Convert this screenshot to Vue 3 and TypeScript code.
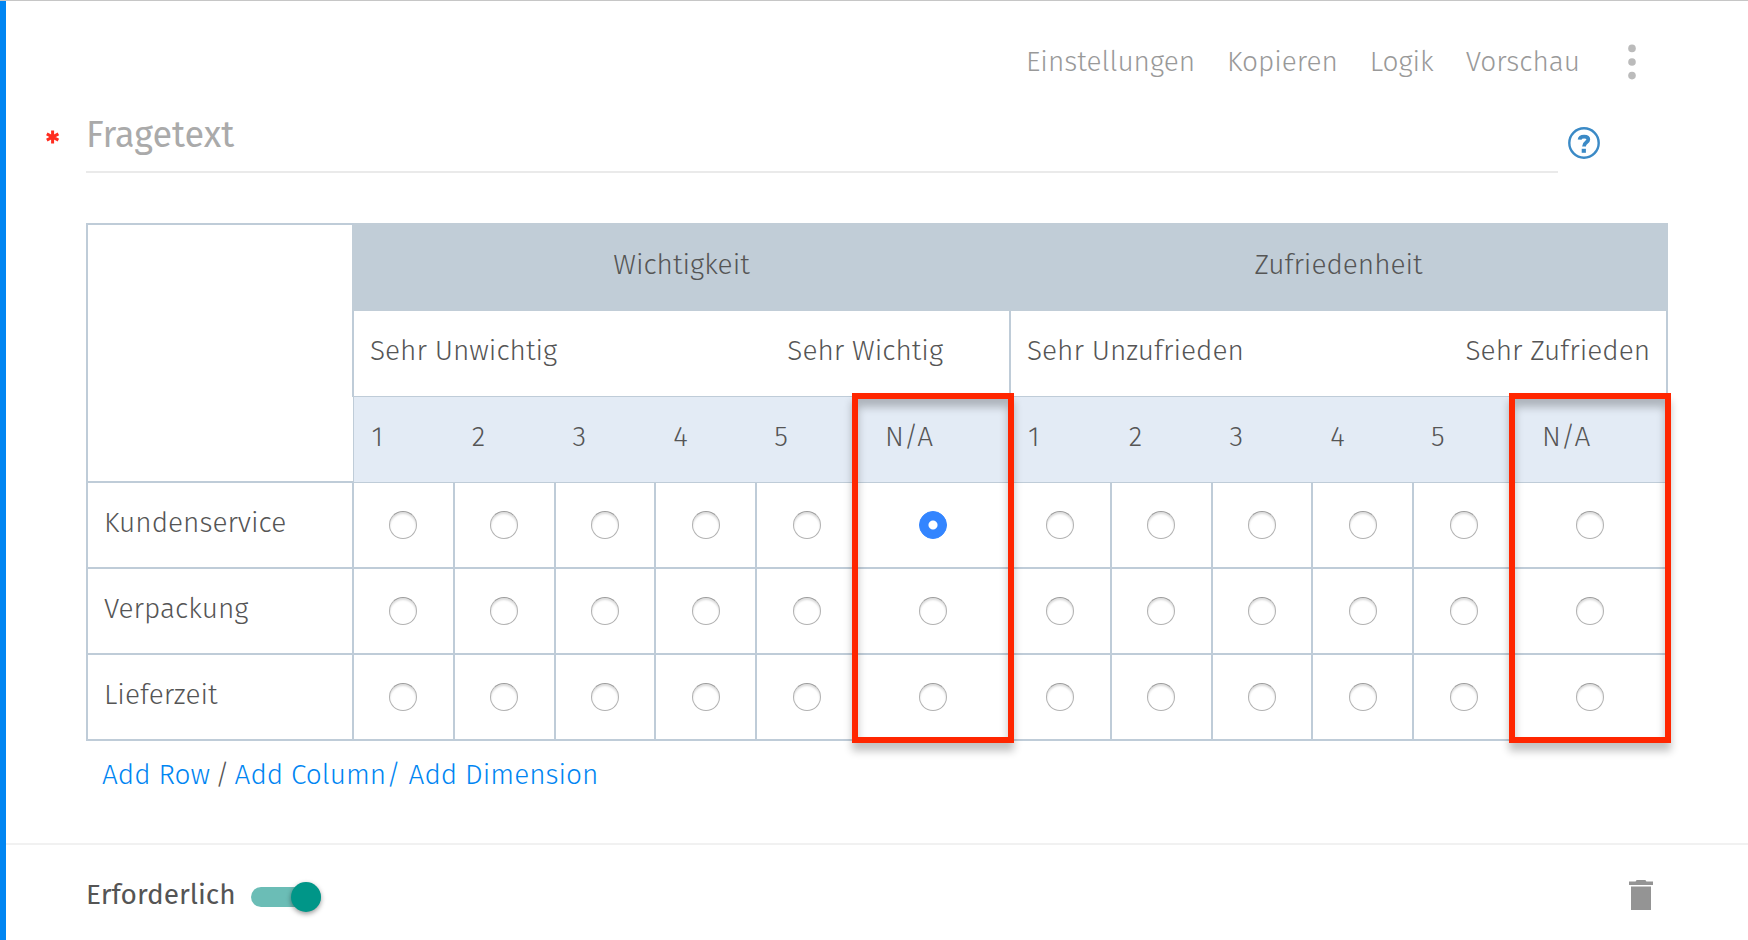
<script setup lang="ts">
import { reactive, ref } from 'vue'

interface Dimension {
  id: string
  title: string
  low: string
  high: string
  inset: boolean
}

const actions: string[] = ['Einstellungen', 'Kopieren', 'Logik', 'Vorschau']
const scale: string[] = ['1', '2', '3', '4', '5', 'N/A']
const rows: string[] = ['Kundenservice', 'Verpackung', 'Lieferzeit']
const dimensions: Dimension[] = [
  { id: 'importance', title: 'Wichtigkeit', low: 'Sehr Unwichtig', high: 'Sehr Wichtig', inset: true },
  { id: 'satisfaction', title: 'Zufriedenheit', low: 'Sehr Unzufrieden', high: 'Sehr Zufrieden', inset: false },
]

const question = ref('')
const required = ref(true)
const answers = reactive<Record<string, string>>({ 'importance-Kundenservice': 'N/A' })
</script>

<template>
  <div class="page">
    <main class="card">
      <section class="editor">
        <nav class="actions">
          <a v-for="action in actions" :key="action" href="#">{{ action }}</a>
          <button class="icon-button more" type="button" aria-label="Mehr">
            <svg width="8" height="36" viewBox="0 0 8 36" fill="#bbb">
              <circle cx="4" cy="4.4" r="3.8" />
              <circle cx="4" cy="18" r="3.8" />
              <circle cx="4" cy="31.6" r="3.8" />
            </svg>
          </button>
        </nav>

        <div class="question">
          <svg class="star" width="14" height="14" viewBox="0 0 14 14" stroke="#ff2d20" stroke-width="3">
            <path d="M6.6 .6V13.4M.8 3.9L12.4 10.1M12.4 3.9L.8 10.1" />
          </svg>
          <input v-model="question" class="question-text" type="text" placeholder="Fragetext" aria-label="Fragetext" />
          <button class="icon-button help" type="button" aria-label="Hilfe">
            <svg width="32" height="32" viewBox="0 0 32 32" fill="none" stroke="#3b8ac6">
              <circle cx="16" cy="16" r="14.7" stroke-width="2.4" />
              <path d="M11.6 12.6C11.8 10.3 13.6 9.6 16.1 9.6C18.8 9.6 20.3 10.5 20.3 12.6C20.3 15.4 16 15.4 16 19.4" stroke-width="3.8" />
              <path d="M15.8 21.8V25.8" stroke-width="4.2" />
            </svg>
          </button>
        </div>

        <div class="matrix-wrap">
          <table class="matrix">
            <colgroup>
              <col class="col-label" />
              <template v-for="dim in dimensions" :key="dim.id">
                <col v-for="point in scale" :key="point" :class="{ 'col-na': point === 'N/A' }" />
              </template>
            </colgroup>
            <thead>
              <tr>
                <td class="corner" rowspan="3"></td>
                <th v-for="dim in dimensions" :key="dim.id" class="title" colspan="6" scope="colgroup">{{ dim.title }}</th>
              </tr>
              <tr>
                <td v-for="dim in dimensions" :key="dim.id" class="range" colspan="6">
                  <div class="ends" :class="{ inset: dim.inset }">
                    <span>{{ dim.low }}</span>
                    <span>{{ dim.high }}</span>
                  </div>
                </td>
              </tr>
              <tr class="points">
                <template v-for="dim in dimensions" :key="dim.id">
                  <th v-for="point in scale" :key="point" :class="{ na: point === 'N/A' }" scope="col">{{ point }}</th>
                </template>
              </tr>
            </thead>
            <tbody>
              <tr v-for="row in rows" :key="row">
                <th scope="row">{{ row }}</th>
                <template v-for="dim in dimensions" :key="dim.id">
                  <td v-for="point in scale" :key="point">
                    <input
                      v-model="answers[`${dim.id}-${row}`]"
                      class="radio"
                      type="radio"
                      :name="`${dim.id}-${row}`"
                      :value="point"
                      :aria-label="`${row}, ${dim.title}: ${point}`"
                    />
                  </td>
                </template>
              </tr>
            </tbody>
          </table>
          <div class="marks" aria-hidden="true">
            <div class="mark first"></div>
            <div class="mark second"></div>
          </div>
        </div>

        <div class="adders">
          <a href="#">Add Row</a>
          <span>/</span>
          <span><a href="#">Add Column/</a> <a href="#">Add Dimension</a></span>
        </div>
      </section>

      <footer class="footer">
        <label class="toggle-label" for="required">Erforderlich</label>
        <input id="required" v-model="required" class="toggle" type="checkbox" role="switch" />
        <button class="icon-button trash" type="button" aria-label="Löschen">
          <svg width="24" height="30" viewBox="0 0 24 30" fill="#949494">
            <path d="M0 1.4H6.6L7.6 0H16.4L17.4 1.4H24V5H0ZM2 6.4H22V30H2Z" />
          </svg>
        </button>
      </footer>
    </main>
  </div>
</template>

<style>
body {
  margin: 0;
  background: #fff;
}
</style>

<style scoped>
.page {
  box-sizing: border-box;
  display: flex;
  min-height: 100vh;
  border-top: 1px solid #c6c6c6;
  background: #fff;
  color: #555;
  font: 300 28px/36px "Fira Sans", "Open Sans", "Noto Sans", sans-serif;
}

.card {
  display: flex;
  flex: 1;
  flex-direction: column;
  min-width: 0;
  border-left: 6px solid #0085f2;
}

a {
  color: #0085f2;
  text-decoration: none;
}

.icon-button {
  padding: 0;
  border: 0;
  background: none;
  line-height: 0;
  cursor: pointer;
}

.icon-button svg {
  display: block;
}

.editor {
  padding: 39px 80px 50px;
}

.actions {
  display: flex;
  align-items: center;
  justify-content: flex-end;
  gap: 32px;
  height: 44px;
  padding-right: 32px;
}

.actions a {
  color: #999;
}

.more {
  margin-left: 16px;
}

.question {
  display: flex;
  align-items: flex-start;
  margin: 25px 68px 50px -40px;
}

.star {
  flex: none;
  margin: 21px 26px 0 0;
}

.question-text {
  box-sizing: border-box;
  flex: 1;
  min-width: 0;
  height: 64px;
  padding: 0 0 10px;
  border: 0;
  border-bottom: 2px solid #eaeaea;
  outline: 0;
  background: none;
  color: #555;
  font: inherit;
  font-size: 36px;
  font-weight: 400;
}

.question-text::placeholder {
  color: #aaa;
  opacity: 1;
}

.help {
  margin: 18px 0 0 10px;
}

.matrix-wrap {
  position: relative;
}

.matrix {
  width: 100%;
  table-layout: fixed;
  border-collapse: collapse;
}

.col-label {
  width: 266px;
}

.col-na {
  width: 153px;
}

.matrix tr {
  height: 86px;
}

.matrix th,
.matrix td {
  box-sizing: border-box;
  height: 86px;
  padding: 0;
  border: 0 solid #bfccd8;
  font-weight: 300;
  text-align: left;
  vertical-align: middle;
}

.matrix th {
  padding: 0 16px 5px;
}

.matrix .corner {
  border-width: 2px 0 2px 2px;
}

.matrix .title {
  border: 2px solid #c1cdd7;
  background: #c1cdd7;
  text-align: center;
}

.matrix .range {
  padding: 0 16px 5px;
  border-width: 0 2px 1px;
}

.ends {
  display: flex;
  justify-content: space-between;
}

.ends.inset {
  padding-right: 50px;
}

.matrix .points th {
  padding-left: 18px;
  border-bottom-width: 1px;
  background: #e3ebf5;
}

.matrix .points th:first-child {
  border-left-width: 1px;
}

.matrix .points .na {
  padding-left: 28px;
}

.matrix tbody th,
.matrix tbody td {
  border-width: 2px;
}

.matrix tbody tr:first-child td {
  border-top-width: 0;
}

.matrix tbody td {
  text-align: center;
}

.radio {
  display: block;
  width: 28px;
  height: 28px;
  margin: 0 auto;
  border: 1px solid #b2b2b2;
  border-top-color: #9c9c9c;
  border-radius: 50%;
  appearance: none;
  background: #fff;
  box-shadow: inset 0 2px 2px #ddd;
}

.radio:checked {
  border-color: #3385ff;
  background: radial-gradient(circle, #fff 0 4px, #3385ff 5px);
  box-shadow: none;
}

.marks {
  position: absolute;
  inset: 170px 1px -2px;
  display: grid;
  grid-template-columns: 266px repeat(5, 1fr) 153px repeat(5, 1fr) 153px;
  pointer-events: none;
}

.mark {
  margin: 0 -4px 0 -5px;
  border: 6px solid #ff2600;
  box-shadow: 0 8px 8px rgba(0, 0, 0, 0.24), inset 0 8px 8px rgba(0, 0, 0, 0.24);
}

.mark.first {
  grid-column: 7;
}

.mark.second {
  grid-column: 13;
}

.adders {
  display: flex;
  gap: 5px;
  margin-top: 16px;
  padding-left: 16px;
}

.footer {
  display: flex;
  flex: 1;
  align-items: flex-start;
  padding: 32px 95px 24px 80px;
  border-top: 2px solid #f1f1f1;
}

.toggle-label {
  font-weight: 400;
}

.toggle {
  display: flex;
  align-items: center;
  justify-content: flex-end;
  width: 70px;
  height: 20px;
  margin: 10px 0 0 15px;
  border-radius: 10px;
  appearance: none;
  background: #6bbdb6;
}

.toggle::before {
  width: 30px;
  height: 30px;
  border-radius: 50%;
  background: #009688;
  box-shadow: 0 2px 5px rgba(0, 0, 0, 0.4);
  content: "";
}

.toggle:not(:checked) {
  justify-content: flex-start;
  background: #bbb;
}

.trash {
  margin: 3px 0 0 auto;
}
</style>
